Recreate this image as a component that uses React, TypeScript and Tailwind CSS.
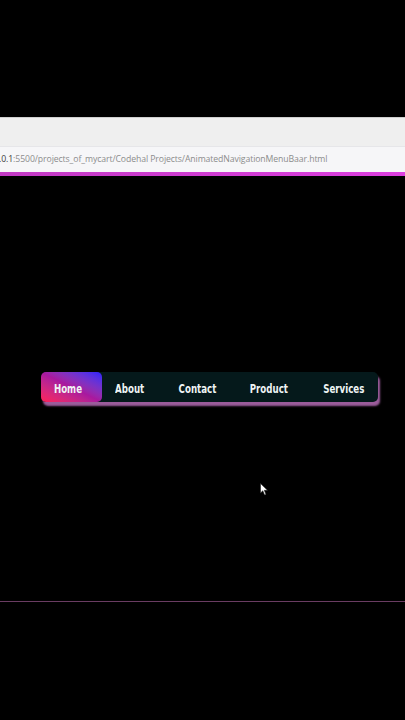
import React from "react";

const items = [
  { label: "Home", w: "w-[53px]" },
  { label: "About", w: "w-[71px]" },
  { label: "Contact", w: "w-[64px]" },
  { label: "Product", w: "w-[80px]" },
  { label: "Services", w: "w-[69px]" },
];

export default function App() {
  return (
    <div className="w-[405px] h-[720px] bg-black flex flex-col overflow-hidden relative">
      <div className="h-[117px] shrink-0" />
      <div className="h-[1px] shrink-0 bg-[#cfcfcf]" />
      <div className="h-[28px] shrink-0 bg-[#efefef]" />
      <div className="h-[26px] shrink-0 bg-[#f6f6f8] flex items-center border-t border-[#e6e6e9]">
        <span
          className="text-[8.7px] text-[#8c8c8c] whitespace-nowrap -ml-[1px] tracking-[-0.1px]"
          style={{ fontFamily: '"Open Sans", "Noto Sans", sans-serif' }}
        >
          <span className="text-[#3c3c3c]">.0.1</span>:5500/projects_of_mycart/Codehal Projects/AnimatedNavigationMenuBaar.html
        </span>
      </div>
      <div className="h-[4px] shrink-0 bg-gradient-to-r from-[#c23ac4] to-[#dd3fe0]" />
      <div className="h-[196px] shrink-0" />
      <div className="pl-[41px]">
        <nav
          className="relative w-[337px] h-[30px] rounded-[5px] bg-[#05191b] flex items-center shadow-[2px_4px_2px_#9b5c9b]"
          style={{ fontFamily: '"DejaVu Sans Condensed", "DejaVu Sans", sans-serif' }}
        >
          <span className="absolute left-0 top-0 h-[30px] w-[61px] rounded-[5px] bg-gradient-to-tr from-[#ff1f55] via-[#a8189f] to-[#2c1cff]" />
          {items.map((it) => (
            <a
              key={it.label}
              className={`relative ${it.w} flex justify-center pt-[2px] text-[13px] font-bold text-[#eef4f4] leading-none`}
            >
              <span className="inline-block scale-x-[0.74] whitespace-nowrap">{it.label}</span>
            </a>
          ))}
        </nav>
      </div>
      <div className="absolute left-[260px] top-[483px]">
        <svg width="9" height="13" viewBox="0 0 9 13">
          <path d="M0.5 0.5 L0.5 10 L2.8 7.8 L4.6 12 L6 11.4 L4.3 7.3 L7.5 7.3 Z" fill="#ffffff" stroke="#222" strokeWidth="0.6" />
        </svg>
      </div>
      <div className="absolute left-0 top-[601px] w-[405px] h-[1px] bg-[#6a3c62]" />
    </div>
  );
}
